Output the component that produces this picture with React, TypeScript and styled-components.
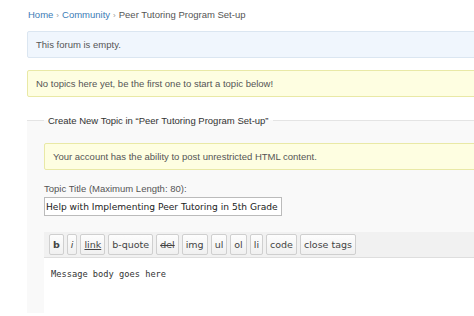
import React from "react";
import styled, { createGlobalStyle } from "styled-components";

const GlobalStyle = createGlobalStyle`
  html, body {
    margin: 0;
    padding: 0;
    background: #fff;
    overflow: hidden;
  }
  body {
    font-family: "Liberation Sans", Arial, sans-serif;
    font-size: 9.5px;
    color: #555;
  }
`;

const Page = styled.div`
  width: 520px;
  padding: 9px 0 0 27px;
`;

const Breadcrumb = styled.div`
  height: 22px;
  line-height: 12px;
  padding-left: 1px;
  color: #555;
`;

const Crumb = styled.a`
  color: #3b7cb6;
  text-decoration: none;
`;

const Sep = styled.span`
  color: #999;
  margin: 0 3px;
  font-size: 8px;
`;

const Notice = styled.div<{ $tone: "info" | "warn" }>`
  box-sizing: border-box;
  height: 27px;
  line-height: 25px;
  padding-left: 8px;
  border: 1px solid ${(p) => (p.$tone === "info" ? "#dbe6f1" : "#e9e9a6")};
  border-radius: 2px;
  background: ${(p) => (p.$tone === "info" ? "#f0f6fd" : "#fefee1")};
  color: #555;
  margin-bottom: ${(p) => (p.$tone === "info" ? "12px" : "0")};
`;

const Fieldset = styled.fieldset`
  margin: 18px 0 0 0;
  padding: 17px 0 0 17px;
  border: none;
  border-top: 1px solid #e4e4e4;
  background: #f9f9f9;
  height: 180px;
  min-width: 0;
`;

const Legend = styled.legend`
  padding: 0 4px;
  margin-left: 0;
  color: #333;
  font-size: 9.5px;
`;

const Label = styled.label`
  display: block;
  margin-top: 13px;
  line-height: 12px;
  color: #555;
`;

const TitleInput = styled.input`
  box-sizing: border-box;
  display: block;
  width: 238px;
  height: 19px;
  margin-top: 2px;
  padding: 0 1px;
  border: 1px solid #bbb;
  background: #fff;
  font-family: "DejaVu Sans", Verdana, sans-serif;
  font-size: 9.1px;
  color: #222;
  outline: none;
`;

const Editor = styled.div`
  margin-top: 16px;
`;

const Toolbar = styled.div`
  display: flex;
  gap: 3px;
  height: 26px;
  box-sizing: border-box;
  padding: 2px 0 0 5px;
  background: #f1f1f1;
  border-bottom: 1px solid #dedede;
`;

const ToolButton = styled.button<{ $kind?: "b" | "i" | "link" | "del" }>`
  box-sizing: border-box;
  height: 21px;
  padding: 0 3px;
  border: 1px solid #cfcfcf;
  border-radius: 2px;
  background: linear-gradient(#fdfdfd, #f0f0f0);
  font-family: "DejaVu Sans", Verdana, sans-serif;
  font-size: 9.5px;
  color: #444;
  font-weight: ${(p) => (p.$kind === "b" ? "bold" : "normal")};
  font-style: ${(p) => (p.$kind === "i" ? "italic" : "normal")};
  text-decoration: ${(p) =>
    p.$kind === "link" ? "underline" : p.$kind === "del" ? "line-through" : "none"};
`;

const Body = styled.div`
  background: #fff;
  height: 60px;
  padding: 11px 0 0 7px;
  font-family: "DejaVu Sans Mono", monospace;
  font-size: 8.7px;
  color: #333;
`;

const buttons: { label: string; kind?: "b" | "i" | "link" | "del" }[] = [
  { label: "b", kind: "b" },
  { label: "i", kind: "i" },
  { label: "link", kind: "link" },
  { label: "b-quote" },
  { label: "del", kind: "del" },
  { label: "img" },
  { label: "ul" },
  { label: "ol" },
  { label: "li" },
  { label: "code" },
  { label: "close tags" },
];

export default function App() {
  return (
    <>
      <GlobalStyle />
      <Page>
        <Breadcrumb>
          <Crumb href="#">Home</Crumb>
          <Sep>›</Sep>
          <Crumb href="#">Community</Crumb>
          <Sep>›</Sep>
          Peer Tutoring Program Set-up
        </Breadcrumb>
        <Notice $tone="info">This forum is empty.</Notice>
        <Notice $tone="warn">
          No topics here yet, be the first one to start a topic below!
        </Notice>
        <Fieldset>
          <Legend>Create New Topic in “Peer Tutoring Program Set-up”</Legend>
          <Notice $tone="warn">
            Your account has the ability to post unrestricted HTML content.
          </Notice>
          <Label>Topic Title (Maximum Length: 80):</Label>
          <TitleInput
            defaultValue="Help with Implementing Peer Tutoring in 5th Grade"
            maxLength={80}
          />
          <Editor>
            <Toolbar>
              {buttons.map((b) => (
                <ToolButton key={b.label} $kind={b.kind}>
                  {b.label}
                </ToolButton>
              ))}
            </Toolbar>
            <Body>Message body goes here</Body>
          </Editor>
        </Fieldset>
      </Page>
    </>
  );
}
